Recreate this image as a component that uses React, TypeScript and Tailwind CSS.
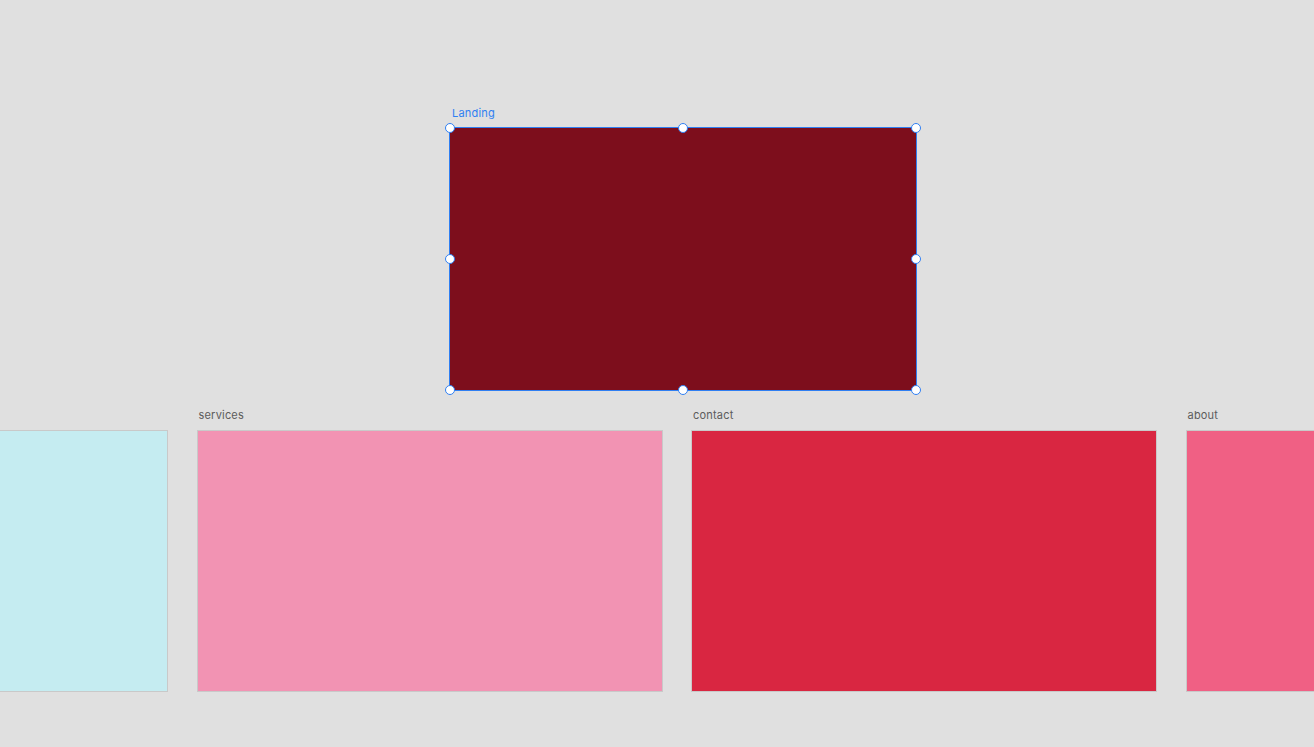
import React from 'react';

const boards = [
  { name: '', color: 'bg-[#c5ecf1]' },
  { name: 'services', color: 'bg-[#f293b3]' },
  { name: 'contact', color: 'bg-[#d92641]' },
  { name: 'about', color: 'bg-[#f06084]' },
];

// selection handle positions on the landing frame
const handles = [
  'left-0 top-0',
  'left-1/2 top-0',
  'left-full top-0',
  'left-0 top-1/2',
  'left-full top-1/2',
  'left-0 top-full',
  'left-1/2 top-full',
  'left-full top-full',
];

const Artboard = ({ name, color }: { name: string; color: string }) => (
  <div className="shrink-0 flex flex-col">
    <div className="h-[22px] pl-[2px] text-[11px] leading-[14px] text-[#5c5c5c] tracking-[0.2px]">{name}</div>
    <div className={`${color} w-[466px] h-[262px] border border-[#c9c9c9]`} />
  </div>
);

export default function App() {
  return (
    <div className="w-[1314px] h-[747px] overflow-hidden bg-[#e0e0e0] font-['Inter','Liberation_Sans',sans-serif] flex flex-col pt-[105px]">
      {/* selected artboard */}
      <div className="ml-[449px] flex flex-col">
        <div className="h-[22px] pl-[3px] text-[11px] leading-[16px] text-[#2f7ff2] tracking-[0.2px]">Landing</div>
        <div className="relative w-[468px] h-[264px] bg-[#7d0e1c] border-[1.5px] border-[#2f7ff2]">
          {handles.map((pos) => (
            <span
              key={pos}
              className={`absolute ${pos} w-[10px] h-[10px] -translate-x-1/2 -translate-y-1/2 rounded-full bg-white border-[1.5px] border-[#2f7ff2]`}
            />
          ))}
        </div>
      </div>

      {/* row of other artboards */}
      <div className="mt-[17px] -ml-[298px] flex gap-[28.5px]">
        {boards.map((b) => (
          <Artboard key={b.color} name={b.name} color={b.color} />
        ))}
      </div>
    </div>
  );
}
